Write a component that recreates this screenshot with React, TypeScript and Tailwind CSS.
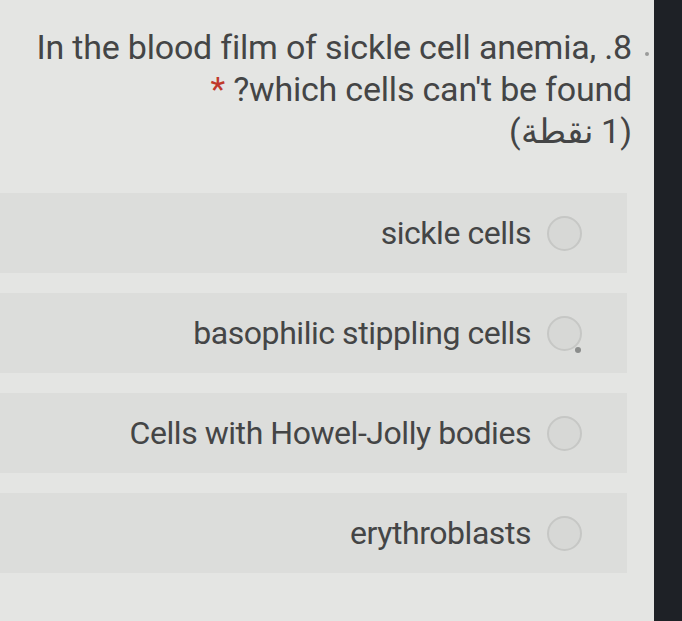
const options = [
  "sickle cells",
  "basophilic stippling cells",
  "Cells with Howel-Jolly bodies",
  "erythroblasts",
];

function Radio({ dot }: { dot?: boolean }) {
  return (
    <div className="relative shrink-0">
      <div className="w-[35px] h-[35px] rounded-full bg-[#d7d8d6] border-2 border-[#c6c7c5]" />
      {dot && <div className="absolute left-[28px] top-[31px] w-[6px] h-[6px] rounded-full bg-[#8b8d8c]" />}
    </div>
  );
}

export default function App() {
  return (
    <div className="w-[682px] h-[621px] flex bg-[#e4e5e3] overflow-hidden font-['Roboto','Liberation_Sans',sans-serif] text-[#444546]">
      <div className="flex-1 flex flex-col">
        <div className="pt-[26px] pr-[22px] pl-[10px] text-right text-[34px] leading-[42px] tracking-[-0.2px] whitespace-nowrap">
          <div className="relative">
            In the blood film of sickle cell anemia, .8
            <span className="absolute right-[-17px] top-[26px] w-[4px] h-[4px] rounded-full bg-[#9a9b9a]" />
          </div>
          <div>
            <span className="text-[#c0392b]">*</span> ?which cells can't be found
          </div>
          <div dir="rtl" className="text-right font-['Roboto','Noto_Sans',sans-serif]">
            (1 نقطة)
          </div>
        </div>
        <div className="mt-[41px] flex flex-col gap-[20px] pr-[27px]">
          {options.map((o, i) => (
            <div key={o} className="h-[80px] bg-[#dcdddb] flex items-center justify-end pr-[45px] gap-[16px]">
              <span className="text-[32px] tracking-[-0.45px]">{o}</span>
              <Radio dot={i === 1} />
            </div>
          ))}
        </div>
      </div>
      <div className="w-[28px] bg-[#1e2126]" />
    </div>
  );
}
